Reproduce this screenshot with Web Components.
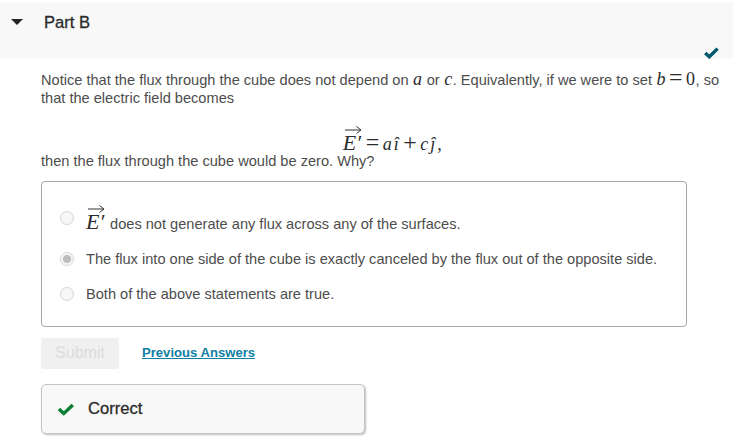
<!DOCTYPE html>
<html>
<head>
<meta charset="utf-8">
<title>Part B</title>
<style>
  html, body { margin: 0; padding: 0; background: #fff; }
  body { width: 733px; height: 440px; overflow: hidden; font-family: "Liberation Sans", Arial, sans-serif; font-size: 14.6px; line-height: 18px; color: #4d4d4d; }
  .main { display: block; padding: 0 13px 0 41px; }
  .eq { display: flex; justify-content: center; align-items: baseline; padding: 27px 0 0 24px; height: 18px; }
</style>
</head>
<body>
<part-header>Part B</part-header>
<div class="main">
  <div style="padding-top:12px">Notice that the flux through the cube does not depend on <m-i>a</m-i> or <m-i>c</m-i>. Equivalently, if we were to set <m-i>b</m-i><m-i plain op>=</m-i><m-i plain>0</m-i>, so<br>that the electric field becomes</div>
  <div class="eq"><vec-e></vec-e><m-i plain op>=</m-i><m-i>a</m-i><m-i wide>î</m-i><m-i plain op>+</m-i><m-i>c</m-i><m-i wide>ĵ</m-i><m-i plain>,</m-i></div>
  <div>then the flux through the cube would be zero. Why?</div>
  <choice-box>
    <choice-option raised><vec-e></vec-e> does not generate any flux across any of the surfaces.</choice-option>
    <choice-option selected>The flux into one side of the cube is exactly canceled by the flux out of the opposite side.</choice-option>
    <choice-option>Both of the above statements are true.</choice-option>
  </choice-box>
  <submit-row></submit-row>
  <feedback-box>Correct</feedback-box>
</div>
<script>
class PartHeader extends HTMLElement {
  connectedCallback() {
    const shadow = this.attachShadow({ mode: "open" });
    shadow.innerHTML = `
      <style>
        :host { display: flex; position: relative; box-sizing: border-box; height: 56px; margin-top: 3px; background: #f8f8f8; padding: 11px 0 0 11px; color: #2b2b2b; font-size: 16.6px; line-height: 18px; -webkit-text-stroke: .3px #2b2b2b; }
        .tri { width: 0; height: 0; margin-top: 5px; border-left: 6px solid transparent; border-right: 6px solid transparent; border-top: 6px solid #222; }
        .title { margin-left: 21px; }
        svg { position: absolute; right: 14px; bottom: 0; }
      </style>
      <div class="tri"></div>
      <div class="title"><slot></slot></div>
      <svg width="15" height="12" viewBox="0 0 15 12"><path d="M1.2 6 L5.3 9.8 L13.6 1.6" fill="none" stroke="#00586e" stroke-width="3.4"/></svg>
    `;
  }
}
customElements.define("part-header", PartHeader);

// math letters
class MathI extends HTMLElement {
  connectedCallback() {
    const shadow = this.attachShadow({ mode: "open" });
    const style = this.hasAttribute("plain") ? "normal" : "italic";
    let extra = "margin: 0 .5px;";
    if (this.hasAttribute("op")) extra = "margin: 0 3px; font-size: 24px;";
    if (this.hasAttribute("wide")) extra = "margin: 0 1.5px;";
    shadow.innerHTML = `<style>:host { display: inline; font-family: "Liberation Serif", serif; font-style: ${style}; font-size: 18px; line-height: 0; color: #2b2b2b; ${extra} }</style><slot></slot>`;
  }
}
customElements.define("m-i", MathI);

class VecE extends HTMLElement {
  connectedCallback() {
    const shadow = this.attachShadow({ mode: "open" });
    shadow.innerHTML = `<style>
        :host { display: inline-block; position: relative; width: 20px; font-family: "Liberation Serif", serif; font-style: italic; font-size: 22px; line-height: 18px; color: #2b2b2b; }
        svg { position: absolute; left: 2px; top: -9px; }
      </style>E&#8242;<svg width="17" height="10" viewBox="0 0 17 10"><path d="M0 5 H15.5 M11.5 1.5 L16 5 L11.5 8.5" fill="none" stroke="#333" stroke-width="1"/></svg>`;
  }
}
customElements.define("vec-e", VecE);

class ChoiceBox extends HTMLElement {
  connectedCallback() {
    const shadow = this.attachShadow({ mode: "open" });
    shadow.innerHTML = `
      <style>
        :host { display: flex; flex-direction: column; box-sizing: border-box; width: 646px; height: 146px; margin-top: 11px; border: 1px solid #a6a6a6; border-radius: 4px; padding: 23px 0 0 18px; }
      </style>
      <slot></slot>
    `;
  }
}
customElements.define("choice-box", ChoiceBox);

class ChoiceOption extends HTMLElement {
  connectedCallback() {
    const shadow = this.attachShadow({ mode: "open" });
    const dot = this.hasAttribute("selected") ? "<i></i>" : "";
    const lift = this.hasAttribute("raised") ? "margin-bottom: 10px;" : "";
    shadow.innerHTML = `
      <style>
        :host { display: flex; align-items: center; height: 35.7px; }
        .radio { display: flex; align-items: center; justify-content: center; box-sizing: border-box; width: 14px; height: 14px; border: 1px solid #d6d6d6; border-radius: 50%; background: #f6f6f6; margin-right: 12px; ${lift} }
        i { display: block; width: 8px; height: 8px; border-radius: 50%; background: #bcbcbc; }
      </style>
      <div class="radio">${dot}</div>
      <div><slot></slot></div>
    `;
  }
}
customElements.define("choice-option", ChoiceOption);

class SubmitRow extends HTMLElement {
  connectedCallback() {
    const shadow = this.attachShadow({ mode: "open" });
    shadow.innerHTML = `
      <style>
        :host { display: flex; align-items: center; margin-top: 11px; height: 31px; }
        .btn { box-sizing: border-box; width: 78px; height: 31px; line-height: 30px; text-align: center; background: #f0f0f0; border-radius: 2px; color: #dcdcdc; font-size: 16px; }
        a { margin-left: 23px; margin-top: -2px; color: #0f7fa3; font-size: 13.1px; font-weight: bold; text-decoration: underline; }
      </style>
      <div class="btn">Submit</div>
      <a href="#">Previous Answers</a>
    `;
  }
}
customElements.define("submit-row", SubmitRow);

class FeedbackBox extends HTMLElement {
  connectedCallback() {
    const shadow = this.attachShadow({ mode: "open" });
    shadow.innerHTML = `
      <style>
        :host { display: flex; align-items: center; box-sizing: border-box; width: 324px; height: 50px; margin-top: 15px; padding: 0 0 0 16px; background: #f8f8f8; border: 1px solid #c4c4c4; border-radius: 5px; box-shadow: 1px 1px 2px #bdbdbd; color: #2b2b2b; font-size: 16.6px; -webkit-text-stroke: .3px #2b2b2b; }
        svg { margin-right: 14px; }
      </style>
      <svg width="16" height="13" viewBox="0 0 16 13"><path d="M1 6 L5.8 10.5 L14.8 2" fill="none" stroke="#0a8037" stroke-width="3.4"/></svg>
      <slot></slot>
    `;
  }
}
customElements.define("feedback-box", FeedbackBox);
</script>
</body>
</html>
